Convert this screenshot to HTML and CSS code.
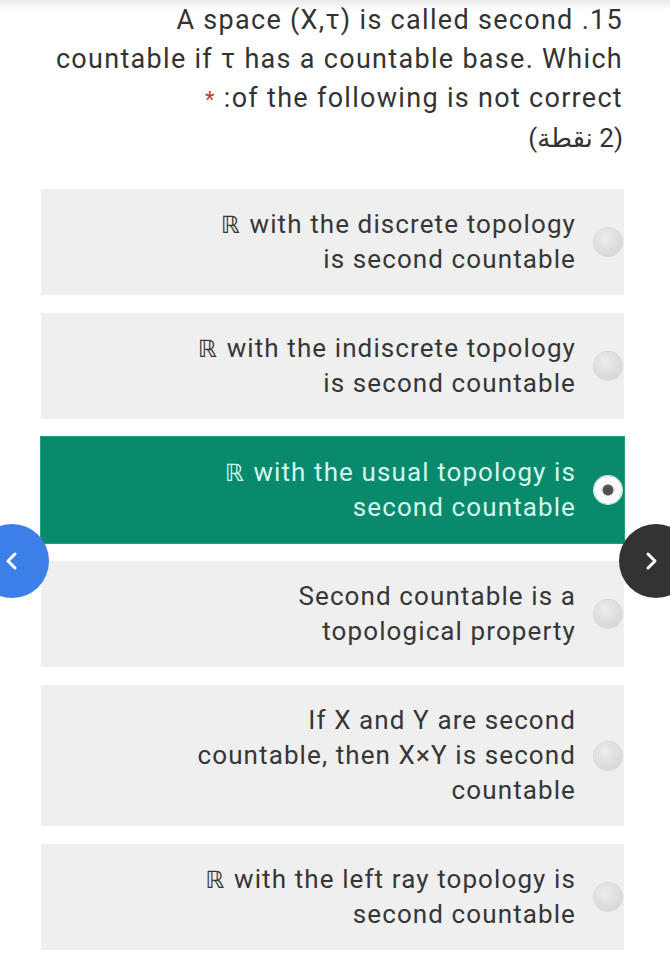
FILE: index.html
```html
<!DOCTYPE html>
<html>
<head>
<meta charset="utf-8">
<link rel="stylesheet" href="styles.css">
</head>
<body>
<div class="page">
  <div class="question">
    <div class="q-line">A space (X,τ) is called second .15</div>
    <div class="q-line">countable if τ has a countable base. Which</div>
    <div class="q-line"><span class="req">*</span> :of the following is not correct</div>
    <div class="q-line points" dir="rtl">(2 نقطة)</div>
  </div>
  <div class="options">
    <div class="option">
      <div class="opt-text"><span class="bb">ℝ</span> with the discrete topology<br>is second countable</div>
      <span class="radio"></span>
    </div>
    <div class="option">
      <div class="opt-text"><span class="bb">ℝ</span> with the indiscrete topology<br>is second countable</div>
      <span class="radio"></span>
    </div>
    <div class="option selected">
      <div class="opt-text"><span class="bb">ℝ</span> with the usual topology is<br>second countable</div>
      <span class="radio"></span>
    </div>
    <div class="option">
      <div class="opt-text">Second countable is a<br>topological property</div>
      <span class="radio"></span>
    </div>
    <div class="option">
      <div class="opt-text">If X and Y are second<br>countable, then X×Y is second<br>countable</div>
      <span class="radio"></span>
    </div>
    <div class="option">
      <div class="opt-text"><span class="bb">ℝ</span> with the left ray topology is<br>second countable</div>
      <span class="radio"></span>
    </div>
  </div>
  <div class="nav nav-prev">
    <svg width="16" height="20" viewBox="0 0 16 20"><path d="M11 3 L4 10 L11 17" fill="none" stroke="#fff" stroke-width="3" stroke-linecap="round" stroke-linejoin="round"/></svg>
  </div>
  <div class="nav nav-next">
    <svg width="16" height="20" viewBox="0 0 16 20"><path d="M5 3 L12 10 L5 17" fill="none" stroke="#fff" stroke-width="3" stroke-linecap="round" stroke-linejoin="round"/></svg>
  </div>
</div>
</body>
</html>
```
FILE: styles.css
```css
html, body {
  margin: 0;
  padding: 0;
  background: #ffffff;
}
body {
  font-family: Roboto, "DejaVu Sans", sans-serif;
  color: #353535;
}
.page {
  position: relative;
  width: 670px;
  height: 954px;
  overflow: hidden;
  background: linear-gradient(#e9e9e9 0px, #ffffff 10px);
}
.question {
  padding: 1px 47px 0 0;
  text-align: right;
  font-size: 27px;
  letter-spacing: 1.3px;
  line-height: 39px;
  color: #333;
}
.req {
  color: #c0392b;
  font-size: 22px;
}
.points {
  font-size: 26px;
  letter-spacing: 0.5px;
}
.options {
  margin: 31px 46px 0 41px;
  display: flex;
  flex-direction: column;
  gap: 18px;
}
.option {
  background: #efefef;
  display: flex;
  align-items: center;
  justify-content: flex-end;
  padding: 18px 2px 18px 10px;
  gap: 18px;
}
.opt-text {
  text-align: right;
  font-size: 26px;
  letter-spacing: 1.1px;
  line-height: 35px;
  color: #363636;
}
.bb {
  font-family: "DejaVu Sans", sans-serif;
  font-size: 24px;
  line-height: 1;
  letter-spacing: 0;
  margin-right: 2px;
}
.radio {
  flex: none;
  width: 28px;
  height: 28px;
  border-radius: 50%;
  background: radial-gradient(circle at 40% 35%, #ececec 0%, #d9d9d9 70%, #cfcfcf 100%);
  box-shadow: 0 0 0 1px #d6d6d6;
}
.option.selected {
  background: #0a8a6c;
  box-shadow: 0 0 0 1px #1aa184;
}
.option.selected .opt-text {
  color: #d4f6ec;
}
.option.selected .radio {
  background: radial-gradient(circle, #4a4a4a 0, #555 5px, #f7f7f7 6px, #ffffff 100%);
  box-shadow: 0 0 0 1px #cfe9e2;
}
.nav {
  position: absolute;
  top: 524px;
  width: 74px;
  height: 74px;
  border-radius: 50%;
  display: flex;
  align-items: center;
  justify-content: center;
  box-sizing: border-box;
}
.nav-prev {
  left: -25px;
  background: #3d7fe9;
}
.nav-next {
  left: 619px;
  background: #333333;
  padding-right: 10px;
}
```
